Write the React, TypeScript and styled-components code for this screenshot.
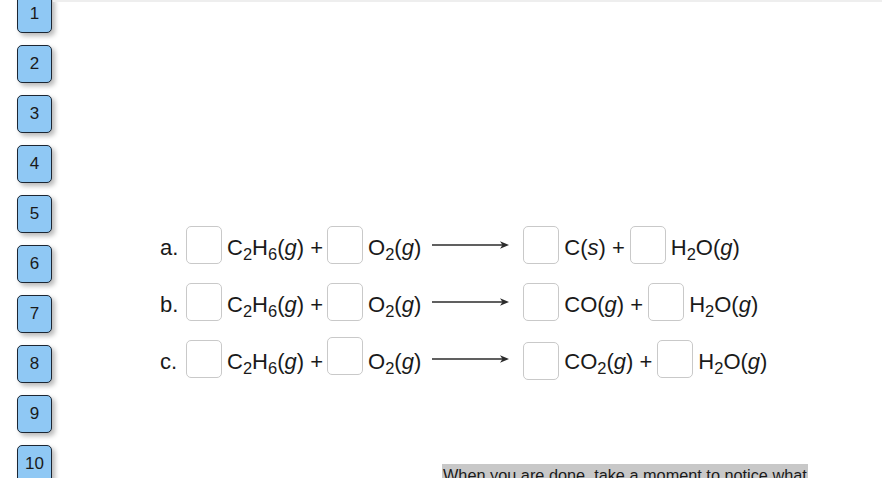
import { FC } from "react";
import styled, { createGlobalStyle } from "styled-components";

const GlobalStyle = createGlobalStyle`
  html, body {
    margin: 0;
    padding: 0;
    background: #fff;
    font-family: "Liberation Sans", Arial, sans-serif;
  }
`;

const Page = styled.div`
  display: flex;
  width: 882px;
  height: 478px;
  overflow: hidden;
`;

const Sidebar = styled.nav`
  display: flex;
  flex-direction: column;
  gap: 12px;
  padding-left: 17px;
  margin-top: -5px;
  width: 35px;
  flex-shrink: 0;
`;

const NavButton = styled.div`
  width: 35px;
  height: 38px;
  flex-shrink: 0;
  box-sizing: border-box;
  border: 1px solid #1c2633;
  border-radius: 5px;
  background: #8fc8f4;
  box-shadow: 3px 3px 5px rgba(0, 0, 0, 0.28);
  display: flex;
  align-items: center;
  justify-content: center;
  font-size: 17px;
  color: #1a1a1a;
`;

const Main = styled.main`
  flex: 1;
  margin-left: 1px;
  border-top: 2px solid #eeeeee;
  display: flex;
  flex-direction: column;
  padding-top: 224px;
  padding-left: 107px;
`;

const Equations = styled.div`
  display: flex;
  flex-direction: column;
  gap: 19px;
`;

const Row = styled.div`
  display: flex;
  align-items: center;
  height: 38px;
  font-size: 22px;
  color: #1a1a1a;
  line-height: 1;
  white-space: nowrap;
`;

const Label = styled.span`
  width: 26px;
  padding-top: 6px;
`;

const Blank = styled.div<{ $shift?: number }>`
  width: 36px;
  height: 38px;
  box-sizing: border-box;
  border: 1px solid #c9c9c9;
  border-radius: 5px;
  background: #fff;
  margin-right: 5px;
  flex-shrink: 0;
  position: relative;
  top: ${(p) => p.$shift ?? 0}px;
`;

const Species = styled.span<{ $gap?: number }>`
  padding-top: 6px;
  margin-right: ${(p) => p.$gap ?? 4}px;
`;

const Sub = styled.sub`
  font-size: 0.75em;
  line-height: 0;
  vertical-align: -0.3em;
`;

const Phase = styled.i`
  font-style: italic;
`;

const Arrow = styled.svg`
  width: 78px;
  height: 12px;
  margin-right: 13px;
  flex-shrink: 0;
`;

const Note = styled.div`
  margin-top: 86px;
  margin-left: 282px;
  align-self: flex-start;
  background: #c8c8c8;
  font-size: 16.3px;
  color: #1a1a1a;
  padding: 2px 1px 0;
  white-space: nowrap;
`;

const YieldArrow: FC = () => (
  <Arrow viewBox="0 0 78 12">
    <line x1="0" y1="6" x2="74" y2="6" stroke="#2b2b2b" strokeWidth="1.6" />
    <path d="M68 2.2 L77 6 L68 9.8 L70.5 6 Z" fill="#2b2b2b" />
  </Arrow>
);

const Products: Record<string, JSX.Element> = {
  a: (
    <>
      C(<Phase>s</Phase>) +
    </>
  ),
  b: (
    <>
      CO(<Phase>g</Phase>) +
    </>
  ),
  c: (
    <>
      CO<Sub>2</Sub>(<Phase>g</Phase>) +
    </>
  ),
};

const Equation: FC<{ letter: string }> = ({ letter }) => (
  <Row>
    <Label>{letter}.</Label>
    <Blank />
    <Species>
      C<Sub>2</Sub>H<Sub>6</Sub>(<Phase>g</Phase>) +
    </Species>
    <Blank $shift={letter === "c" ? -3 : 0} />
    <Species $gap={11}>
      O<Sub>2</Sub>(<Phase>g</Phase>)
    </Species>
    <YieldArrow />
    <Blank $shift={letter === "c" ? 2 : 0} />
    <Species $gap={letter === "a" ? 5 : 5}>{Products[letter]}</Species>
    <Blank />
    <Species>
      H<Sub>2</Sub>O(<Phase>g</Phase>)
    </Species>
  </Row>
);

export default function App() {
  const pages = Array.from({ length: 10 }, (_, i) => i + 1);
  return (
    <>
      <GlobalStyle />
      <Page>
        <Sidebar>
          {pages.map((n) => (
            <NavButton key={n}>{n}</NavButton>
          ))}
        </Sidebar>
        <Main>
          <Equations>
            <Equation letter="a" />
            <Equation letter="b" />
            <Equation letter="c" />
          </Equations>
          <Note>When you are done, take a moment to notice what</Note>
        </Main>
      </Page>
    </>
  );
}
